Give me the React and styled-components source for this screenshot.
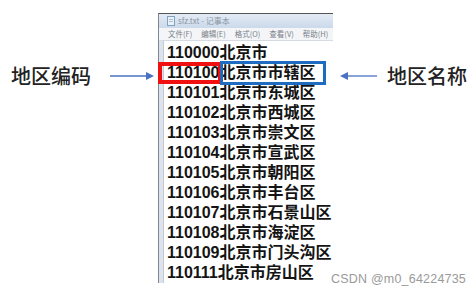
import React from 'react';
import styled, { createGlobalStyle } from 'styled-components';

const GlobalStyle = createGlobalStyle`
  html, body {
    margin: 0;
    padding: 0;
    background: #fff;
  }
`;

const Page = styled.div`
  position: relative;
  display: flex;
  width: 474px;
  height: 296px;
  overflow: hidden;
  font-family: "Noto Sans CJK SC", "Liberation Sans", sans-serif;
`;

const Side = styled.div`
  width: ${({ $w }) => $w}px;
  flex-shrink: 0;
  padding-top: 63px;
  box-sizing: border-box;
`;

const Annotation = styled.div`
  display: flex;
  align-items: center;
  height: 26px;
  gap: ${({ $gap }) => $gap}px;
  padding-left: ${({ $pl }) => $pl}px;
  white-space: nowrap;
`;

const Label = styled.span`
  font-size: 20px;
  line-height: 26px;
  color: #222;
  font-weight: 500;
  white-space: nowrap;
`;

const Window = styled.div`
  width: 175px;
  height: 270px;
  margin-top: 13px;
  display: flex;
  flex-direction: column;
  border-left: 1px solid #7d8794;
  border-top: 1px solid #555;
  box-sizing: border-box;
  background: #fff;
`;

const TitleBar = styled.div`
  height: 17px;
  display: flex;
  align-items: center;
  gap: 3px;
  padding-left: 8px;
  background: linear-gradient(#e3ebf5, #cbd9ea);
  font-size: 8px;
  color: #8a96a6;
`;

const MenuBar = styled.div`
  height: 15px;
  display: flex;
  align-items: center;
  gap: 9px;
  padding-left: 9px;
  background: #f3f5f8;
  font-size: 7.5px;
  color: #7a7f87;
  white-space: nowrap;
`;

const Content = styled.div`
  flex: 1;
  display: flex;
  border-top: 1px solid #d6dbe2;
`;

const Gutter = styled.div`
  width: 4px;
  background: #dde3ec;
  border-right: 1px solid #c3cad4;
`;

const Lines = styled.div`
  padding-left: 3px;
  padding-top: 2px;
  font-family: "Liberation Sans", "Noto Sans CJK SC", sans-serif;
  font-weight: bold;
  font-size: 16px;
  line-height: 20px;
  color: #141414;
  white-space: nowrap;
`;

const Line = styled.div`
  height: 20px;
`;

const Mark = styled.span`
  position: relative;
  display: inline-block;
  height: 20px;
  line-height: 20px;

  &::after {
    content: '';
    position: absolute;
    top: ${({ $t }) => $t}px;
    bottom: ${({ $t }) => $t}px;
    left: ${({ $l }) => $l}px;
    right: ${({ $r }) => $r}px;
    border: ${({ $bw }) => $bw}px solid ${({ $c }) => $c};
  }
`;

const Watermark = styled.div`
  position: absolute;
  right: 8px;
  bottom: 10px;
  font-family: "Liberation Sans", sans-serif;
  font-size: 12.5px;
  color: #9a9a9a;
  letter-spacing: 0.2px;
`;

const Arrow = ({ dir, w }) => (
  <svg width={w} height="10" viewBox={`0 0 ${w} 10`}>
    {dir === 'right' ? (
      <>
        <line x1="0" y1="5" x2={w - 7} y2="5" stroke="#4a72c0" strokeWidth="1.3" />
        <path d={`M${w - 8} 1 L${w} 5 L${w - 8} 9 Z`} fill="#4a72c0" />
      </>
    ) : (
      <>
        <line x1="7" y1="5" x2={w} y2="5" stroke="#4a72c0" strokeWidth="1.3" />
        <path d="M8 1 L0 5 L8 9 Z" fill="#4a72c0" />
      </>
    )}
  </svg>
);

const NoteIcon = () => (
  <svg width="8" height="10" viewBox="0 0 8 10">
    <rect x="0.5" y="0.5" width="7" height="9" fill="#e8f1f7" stroke="#7fa3bf" />
    <line x1="2" y1="3.5" x2="6" y2="3.5" stroke="#9ab" strokeWidth="0.7" />
    <line x1="2" y1="5.5" x2="6" y2="5.5" stroke="#9ab" strokeWidth="0.7" />
  </svg>
);

const rows = [
  '110101北京市东城区',
  '110102北京市西城区',
  '110103北京市崇文区',
  '110104北京市宣武区',
  '110105北京市朝阳区',
  '110106北京市丰台区',
  '110107北京市石景山区',
  '110108北京市海淀区',
  '110109北京市门头沟区',
  '110111北京市房山区',
];

const menus = ['文件(F)', '编辑(E)', '格式(O)', '查看(V)', '帮助(H)'];

export default function App() {
  return (
    <>
      <GlobalStyle />
      <Page>
        <Side $w={158}>
          <Annotation $pl={11} $gap={19}>
            <Label>地区编码</Label>
            <Arrow dir="right" w={44} />
          </Annotation>
        </Side>
        <Window>
          <TitleBar>
            <NoteIcon />
            <span>sfz.txt - 记事本</span>
          </TitleBar>
          <MenuBar>
            {menus.map((m) => (
              <span key={m}>{m}</span>
            ))}
          </MenuBar>
          <Content>
            <Gutter />
            <Lines>
              <Line>110000北京市</Line>
              <Line>
                <Mark $c="#f01010" $bw={4} $t={-1} $l={-9} $r={-2}>110100</Mark>
                <Mark $c="#1d6cc0" $bw={3} $t={-2} $l={0} $r={-10}>北京市市辖区</Mark>
              </Line>
              {rows.map((r) => (
                <Line key={r}>{r}</Line>
              ))}
            </Lines>
          </Content>
        </Window>
        <Side $w={141}>
          <Annotation $pl={7} $gap={10}>
            <Arrow dir="left" w={37} />
            <Label>地区名称</Label>
          </Annotation>
        </Side>
        <Watermark>CSDN @m0_64224735</Watermark>
      </Page>
    </>
  );
}
